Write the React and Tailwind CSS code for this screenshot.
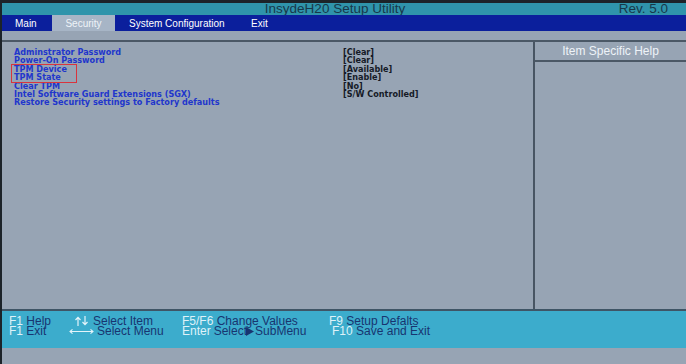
import React from "react";

const items = [
  ["Adminstrator Password", "[Clear]"],
  ["Power-On Password", "[Clear]"],
  ["TPM Device", "[Available]"],
  ["TPM State", "[Enable]"],
  ["Clear TPM", "[No]"],
  ["Intel Software Guard Extensions (SGX)", "[S/W Controlled]"],
  ["Restore Security settings to Factory defaults", ""],
];

function Row({ label, value }) {
  return (
    <div className="grid grid-cols-[329px_1fr] h-[8.4px] leading-[8.4px]">
      <span className="text-[#2136cc] whitespace-nowrap">{label}</span>
      <span className="text-[#151a26] whitespace-nowrap">{value}</span>
    </div>
  );
}

function UpDown() {
  return (
    <svg width="15" height="10" viewBox="0 0 15 10" className="shrink-0">
      <g stroke="#e4f4fa" strokeWidth="1.2" fill="none">
        <path d="M4 10V1.5M1.5 4L4 1.3L6.5 4" />
        <path d="M11 0V8.5M8.5 6L11 8.7L13.5 6" />
      </g>
    </svg>
  );
}

function LeftRight() {
  return (
    <svg width="25" height="8" viewBox="0 0 25 8" className="shrink-0">
      <g stroke="#e4f4fa" strokeWidth="1.1" fill="none">
        <path d="M1 4.5H24M3.5 2.3L1 4.5L3.5 6.7M21.5 2.3L24 4.5L21.5 6.7" />
      </g>
    </svg>
  );
}

export default function App() {
  const key = "inline-block h-[10px] text-[#dff2f9]";
  const desc = "inline-block h-[10px] text-[#183570]";
  return (
    <div className="w-[686px] h-[364px] flex flex-col overflow-hidden bg-[#97a4b4] border-l-2 border-[#1c2329] font-['Liberation_Sans',Arial,sans-serif]">
      <div className="h-[3px] bg-[#1c2329]" />

      <div className="h-[12px] bg-[#2f94ab] flex text-[13.5px] leading-[11px] text-[#17384a]">
        <div className="flex-1" />
        <div className="whitespace-nowrap">InsydeH20 Setup Utility</div>
        <div className="flex-1 flex justify-end pr-[18px]">
          <span className="whitespace-nowrap">Rev. 5.0</span>
        </div>
      </div>

      <div className="h-[16px] bg-[#0b1f9c] flex items-center text-[10px] text-white">
        <div className="w-[50px] pl-[13px]">Main</div>
        <div className="w-[63px] h-full bg-[#a7b5c6] flex items-center justify-center text-[#eef3f8]">
          Security
        </div>
        <div className="pl-[14px] w-[136px] whitespace-nowrap">System Configuration</div>
        <div>Exit</div>
      </div>

      <div className="h-[9px]" />
      <div className="h-[2px] bg-[#4b5866]" />

      <div className="h-[267px] flex">
        <div className="w-[531px] pt-[6px] pl-[12px] font-['DejaVu_Sans_Condensed','DejaVu_Sans',Verdana,sans-serif] text-[9px] font-bold">
          <Row label={items[0][0]} value={items[0][1]} />
          <Row label={items[1][0]} value={items[1][1]} />
          <div className="relative">
            <span className="absolute -left-[3px] -top-[1px] w-[66px] h-[19px] border border-[#d9343d]" />
            <Row label={items[2][0]} value={items[2][1]} />
            <Row label={items[3][0]} value={items[3][1]} />
          </div>
          {items.slice(4).map(([l, v]) => (
            <Row key={l} label={l} value={v} />
          ))}
        </div>
        <div className="w-[2px] bg-[#485563]" />
        <div className="flex-1 flex flex-col">
          <div className="h-[18px] flex items-center justify-center text-[12px] text-[#eef3f8]">
            Item Specific Help
          </div>
          <div className="h-[2px] bg-[#4b5866]" />
        </div>
      </div>

      <div className="h-[2px] bg-[#3f5566]" />

      <div className="h-[37px] bg-[#3caccc] flex pt-[5px] pl-[7px] text-[12px] leading-[10px] whitespace-nowrap">
        <div className="w-[58px] flex flex-col">
          <div className="h-[10px]">
            <span className={key}>F1</span> <span className={desc}>Help</span>
          </div>
          <div className="h-[10px]">
            <span className={key}>F1</span> <span className={desc}>Exit</span>
          </div>
        </div>
        <div className="w-[115px] flex flex-col">
          <div className="flex items-center h-[10px] pl-[7px] gap-[4px]">
            <UpDown />
            <span className={desc}>Select Item</span>
          </div>
          <div className="flex items-center h-[10px] pl-[2px] gap-[3px]">
            <LeftRight />
            <span className={desc}>Select Menu</span>
          </div>
        </div>
        <div className="w-[147px] flex flex-col">
          <div className="h-[10px]">
            <span className={key}>F5/F6</span> <span className={desc}>Change Values</span>
          </div>
          <div className="flex items-center h-[10px]">
            <span className={key}>Enter</span>
            <span className={`${desc} ml-[3px]`}>Select</span>
            <svg width="8" height="9" viewBox="0 0 8 9" className="shrink-0 -ml-[1px] mr-[1px]">
              <path d="M0 0L8 4.5L0 9Z" fill="#183570" />
            </svg>
            <span className={desc}>SubMenu</span>
          </div>
        </div>
        <div className="flex flex-col">
          <div className="h-[10px]">
            <span className={key}>F9</span> <span className={desc}>Setup Defalts</span>
          </div>
          <div className="h-[10px] pl-[3px]">
            <span className={key}>F10</span> <span className={desc}>Save and Exit</span>
          </div>
        </div>
      </div>

      <div className="flex-1" />
    </div>
  );
}
